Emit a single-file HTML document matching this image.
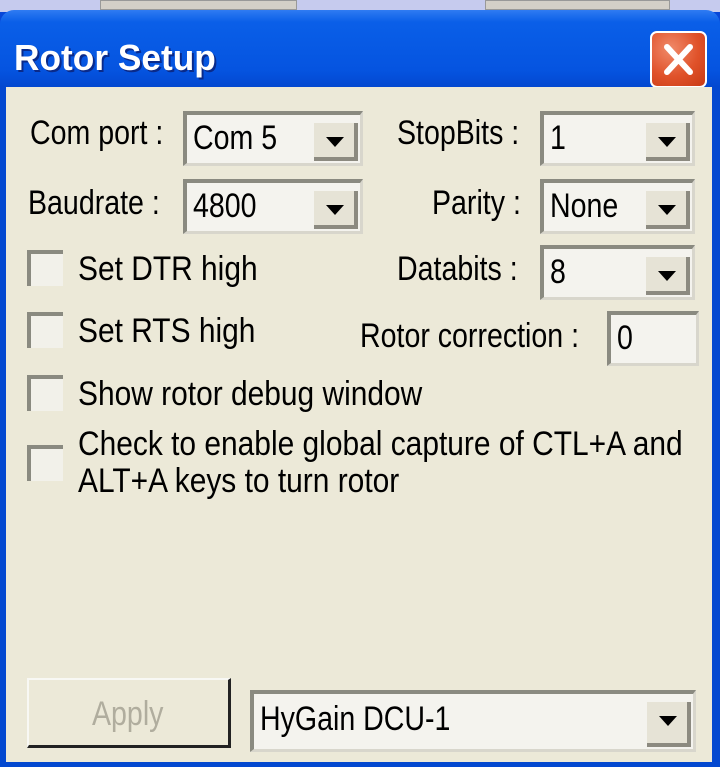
<!DOCTYPE html>
<html><head><meta charset="utf-8"><style>
*{margin:0;padding:0;box-sizing:border-box}
html,body{width:720px;height:767px;overflow:hidden;background:#0847d8;font-family:"Liberation Sans",sans-serif}
.top{position:absolute;left:0;top:0;width:720px;height:12px;background:#c6cbee}
.tb{position:absolute;top:0;height:10px;background:#d4d0c8;border:1px solid #999}
.win{position:absolute;left:0;top:10px;width:720px;height:757px;background:linear-gradient(#2f7bf2 0,#0a5fe8 12px,#0554e0 60px,#0348d0 77px);border-radius:14px 14px 0 0}
.body{position:absolute;left:6px;top:87px;width:706px;height:675px;background:#ece9d8}
.title{position:absolute;left:14px;top:27px;color:#fff;font-weight:bold;font-size:36px;text-shadow:2px 2px 0 #0a2a8a;transform:scaleX(.98);transform-origin:left}
.close{position:absolute;left:650px;top:21px;width:57px;height:57px;border-radius:7px;border:2px solid #fff;background:radial-gradient(circle at 35% 30%,#f08a6a,#e0522a 55%,#c83a14)}
.t{position:absolute;font-size:34px;color:#000;white-space:nowrap;transform:scaleX(.84);transform-origin:left;line-height:1}
.w{transform:scaleX(.88)}
.cb{position:absolute;background:#f4f3ee;border-top:4px solid #8a8a80;border-left:4px solid #8a8a80;border-right:3px solid #d8d6cc;border-bottom:3px solid #d8d6cc}
.dd{position:absolute;right:2px;top:8px;bottom:2px;width:44px;background:#e6e3d6;border-right:4px solid #8c8a80;border-bottom:4px solid #8c8a80}
.dd:after{content:"";position:absolute;left:12px;top:14px;border-left:9px solid transparent;border-right:9px solid transparent;border-top:10px solid #000}
.chk{position:absolute;left:27px;width:36px;height:36px;background:#f2f1ea;border-top:4px solid #8a8a80;border-left:4px solid #8a8a80}
</style></head><body>
<div class="top"><div class="tb" style="left:100px;width:197px"></div><div class="tb" style="left:485px;width:185px"></div></div>
<div class="win">
<div class="title">Rotor Setup</div>
<div class="close"><svg width="53" height="53" viewBox="0 0 53 53"><path d="M15 14 L38 39 M38 14 L15 39" stroke="#fff" stroke-width="6" stroke-linecap="round"/></svg></div>
</div>
<div class="body"></div>

<div class="t" style="left:30px;top:116px">Com port :</div>
<div class="cb" style="left:183px;top:111px;width:180px;height:55px"><div class="t" style="left:6px;top:6px">Com 5</div><div class="dd"></div></div>
<div class="t" style="left:397px;top:116px">StopBits :</div>
<div class="cb" style="left:540px;top:111px;width:155px;height:55px"><div class="t" style="left:6px;top:6px">1</div><div class="dd"></div></div>

<div class="t" style="left:28px;top:186px">Baudrate :</div>
<div class="cb" style="left:183px;top:179px;width:180px;height:55px"><div class="t" style="left:6px;top:6px">4800</div><div class="dd"></div></div>
<div class="t" style="left:432px;top:186px">Parity :</div>
<div class="cb" style="left:540px;top:179px;width:155px;height:55px"><div class="t" style="left:6px;top:6px">None</div><div class="dd"></div></div>

<div class="chk" style="top:250px"></div>
<div class="t w" style="left:78px;top:252px">Set DTR high</div>
<div class="t" style="left:397px;top:252px">Databits :</div>
<div class="cb" style="left:540px;top:245px;width:155px;height:55px"><div class="t" style="left:6px;top:6px">8</div><div class="dd"></div></div>

<div class="chk" style="top:312px"></div>
<div class="t w" style="left:78px;top:314px">Set RTS high</div>
<div class="t" style="left:360px;top:319px">Rotor correction :</div>
<div class="cb" style="left:607px;top:311px;width:92px;height:55px"><div class="t" style="left:6px;top:6px">0</div></div>

<div class="chk" style="top:375px"></div>
<div class="t w" style="left:78px;top:377px">Show rotor debug window</div>

<div class="chk" style="top:445px"></div>
<div class="t w" style="left:78px;top:427px">Check to enable global capture of CTL+A and</div>
<div class="t w" style="left:78px;top:464px">ALT+A keys to turn rotor</div>

<div style="position:absolute;left:27px;top:678px;width:204px;height:70px;background:#ece9d8;border-top:2px solid #f8f8f4;border-left:2px solid #f8f8f4;border-right:3px solid #222;border-bottom:3px solid #222"><div class="t" style="left:63px;top:17px;color:#b0ad9e">Apply</div></div>
<div class="cb" style="left:250px;top:690px;width:446px;height:62px"><div class="t" style="left:6px;top:8px">HyGain DCU-1</div><div class="dd"></div></div>
</body></html>
